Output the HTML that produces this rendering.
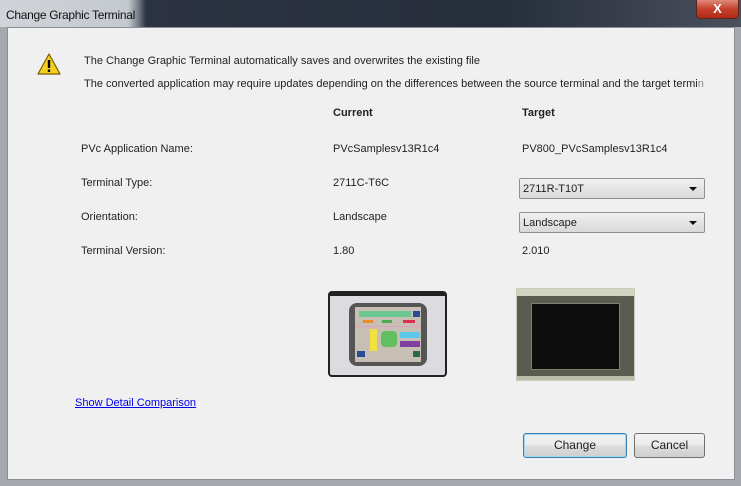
<!DOCTYPE html>
<html><head><meta charset="utf-8"><style>
*{margin:0;padding:0;box-sizing:border-box}
body{width:741px;height:486px;overflow:hidden;background:#7c8290;font-family:"Liberation Sans",sans-serif;font-size:11px;color:#222;position:relative}
.title{position:absolute;left:0;top:0;width:741px;height:27px;background:linear-gradient(90deg,#d0d4d9 0,#c4c9cf 128px,#7a808c 138px,#2c3342 146px,#262d3b 500px,#4a505c 741px)}
.title span{position:absolute;left:6px;top:8px;font-size:12px;color:#111;letter-spacing:-0.3px}
.close{position:absolute;left:696px;top:0;width:43px;height:19px;background:linear-gradient(#e08a7c,#c4402c 50%,#b02a18);border:1px solid #5a2420;border-top:none;border-radius:0 0 4px 4px;color:#fff;font-weight:bold;font-size:13px;text-align:center;line-height:18px}
.frame{position:absolute;left:0;top:27px;width:741px;height:459px;background:#a6aab0}
.body{position:absolute;left:7px;top:27px;width:728px;height:453px;background:#f0f0f0;border:1px solid #8a8e94}
.t{position:absolute;white-space:nowrap}
.dd{position:absolute;width:186px;height:21px;border:1px solid #8e8f8f;border-radius:2px;background:linear-gradient(#f2f2f2,#e4e4e4 50%,#d9d9d9);padding:4px 0 0 3px}
.dd:after{content:"";position:absolute;right:7px;top:8px;border:4px solid transparent;border-top:4px solid #111;border-bottom:none}
.btn{position:absolute;height:25px;border:1px solid #707070;border-radius:3px;background:linear-gradient(#f2f2f2,#ebebeb 50%,#dddddd 51%,#cfcfcf);text-align:center;line-height:23px;font-size:12px}
</style></head><body>
<div class="frame"></div>
<div class="title"><span>Change Graphic Terminal</span></div>
<div class="close">X</div>
<div class="body"></div>
<svg class="t" style="left:37px;top:53px" width="24" height="22" viewBox="0 0 24 22"><path d="M12 1 L23 21 L1 21 Z" fill="#f5d020" stroke="#7a5a00" stroke-width="1.2" stroke-linejoin="round"/><rect x="10.8" y="7" width="2.4" height="8" fill="#000"/><rect x="10.8" y="16.5" width="2.4" height="2.4" fill="#000"/></svg>
<div class="t" style="left:84px;top:55px">The Change Graphic Terminal automatically saves and overwrites the existing file</div>
<div class="t" style="left:84px;top:78px">The converted application may require updates depending on the differences between the source terminal and the target termi<span style="opacity:.5">n</span></div>
<div class="t" style="left:333px;top:107px;font-weight:bold">Current</div>
<div class="t" style="left:522px;top:107px;font-weight:bold">Target</div>
<div class="t" style="left:81px;top:143px">PVc Application Name:</div>
<div class="t" style="left:333px;top:143px">PVcSamplesv13R1c4</div>
<div class="t" style="left:522px;top:143px">PV800_PVcSamplesv13R1c4</div>
<div class="t" style="left:81px;top:177px">Terminal Type:</div>
<div class="t" style="left:333px;top:177px">2711C-T6C</div>
<div class="dd" style="left:519px;top:178px">2711R-T10T</div>
<div class="t" style="left:81px;top:211px">Orientation:</div>
<div class="t" style="left:333px;top:211px">Landscape</div>
<div class="dd" style="left:519px;top:212px">Landscape</div>
<div class="t" style="left:81px;top:245px">Terminal Version:</div>
<div class="t" style="left:333px;top:245px">1.80</div>
<div class="t" style="left:522px;top:245px">2.010</div>
<div class="t" style="left:328px;top:291px;width:119px;height:86px;background:#dcdce0;border:2px solid #222;border-top-width:5px;border-radius:4px">
 <div style="position:absolute;left:19px;top:7px;width:78px;height:63px;background:#555;border-radius:8px"></div>
 <div style="position:absolute;left:25px;top:11px;width:66px;height:55px;background:#c8bfb4"></div>
 <div style="position:absolute;left:29px;top:15px;width:52px;height:6px;background:#6cc890"></div>
 <div style="position:absolute;left:83px;top:15px;width:7px;height:6px;background:#2a4a9a"></div>
 <div style="position:absolute;left:33px;top:24px;width:10px;height:3px;background:#f08a30"></div>
 <div style="position:absolute;left:52px;top:24px;width:10px;height:3px;background:#50a850"></div>
 <div style="position:absolute;left:73px;top:24px;width:12px;height:3px;background:#d83050"></div>
 <div style="position:absolute;left:25px;top:30px;width:66px;height:1px;background:#e0a0c0"></div>
 <div style="position:absolute;left:40px;top:33px;width:7px;height:22px;background:#f0e040"></div>
 <div style="position:absolute;left:51px;top:35px;width:16px;height:16px;background:#60c060;border-radius:4px"></div>
 <div style="position:absolute;left:70px;top:36px;width:20px;height:6px;background:#5ac8e8"></div>
 <div style="position:absolute;left:70px;top:45px;width:20px;height:6px;background:#8040a0"></div>
 <div style="position:absolute;left:27px;top:55px;width:8px;height:6px;background:#2a4a9a"></div>
 <div style="position:absolute;left:83px;top:55px;width:7px;height:6px;background:#2a6a4a"></div>
</div>
<div class="t" style="left:516px;top:288px;width:119px;height:93px;background:#5a5c52;border:1px solid #c8ccb8">
 <div style="position:absolute;left:0;top:0;width:117px;height:7px;background:#d0d4c0"></div>
 <div style="position:absolute;left:0;bottom:0;width:117px;height:4px;background:#b8bca8"></div>
 <div style="position:absolute;left:14px;top:14px;width:89px;height:67px;background:#0c0c0c;border:1px solid #808070"></div>
</div>
<div class="t" style="left:75px;top:397px;color:#0000ee;text-decoration:underline;font-size:11px">Show Detail Comparison</div>
<div class="btn" style="left:523px;top:433px;width:104px;border-color:#3c7fb1;box-shadow:inset 0 0 0 1px #a0d8f0">Change</div>
<div class="btn" style="left:634px;top:433px;width:71px">Cancel</div>
</body></html>
